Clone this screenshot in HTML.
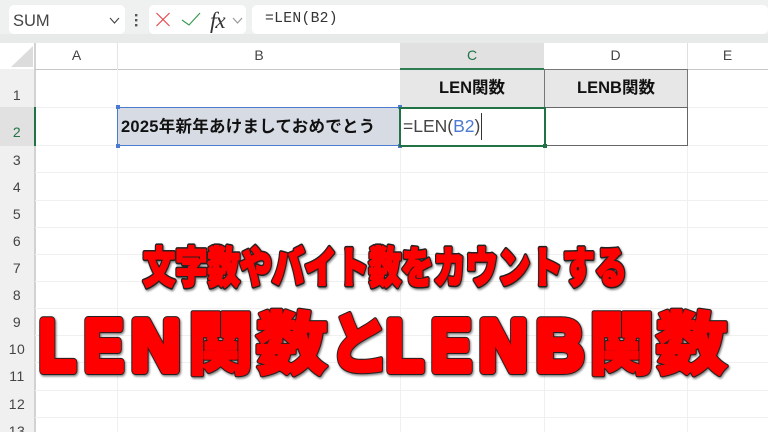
<!DOCTYPE html>
<html lang="ja"><head><meta charset="utf-8">
<style>
html,body{margin:0;padding:0;background:#fff}
#p{position:relative;width:768px;height:432px;overflow:hidden;background:#fff;font-family:"Liberation Sans","Noto Sans CJK JP",sans-serif}
#p div{position:absolute;box-sizing:border-box}
.h{top:43px;height:26px;text-align:center;line-height:24px;font-size:14px;color:#444}
.r{left:0;width:34px;text-align:center;font-size:14px;color:#444;line-height:20px;letter-spacing:.5px}
.gh{background:#f0f0f0;height:1px;left:35px;right:0}
.gv{background:#f0f0f0;width:1px;top:69px;bottom:0}
.b{font-weight:bold;color:#111;white-space:nowrap}
.o{stroke:#222;fill:#222}
.i{stroke:#f00;fill:#f00}
.l{font-family:"Liberation Sans",sans-serif;font-weight:bold;font-size:72px}
.k{font-family:"Noto Sans CJK JP",sans-serif;font-weight:900;font-size:68px}
.sm{font-family:"Noto Sans CJK JP",sans-serif;font-weight:900;font-size:43px}
svg text{stroke-linejoin:round}
.o .l{stroke-width:9px}.i .l{stroke-width:7px}
.o .k{stroke-width:4.500px}.i .k{stroke-width:2.400px}
</style></head><body><div id="p">
<div style="left:0;top:0;width:768px;height:34px;background:#eff0f0"></div>
<div style="left:0;top:34px;width:768px;height:9px;background:#e8e9e9"></div>
<div style="left:9px;top:5px;width:116px;height:29px;background:#fff;border-radius:5px"></div>
<div style="left:13px;top:10px;font-size:16.5px;color:#444;line-height:22px">SUM</div>
<svg style="position:absolute;left:0;top:0" width="768" height="70">
<path d="M110 18l4.500 5 4.500-5" fill="none" stroke="#444" stroke-width="1.100"/>
<rect x="135" y="14" width="2.400" height="2.400" fill="#555"/><rect x="135" y="19" width="2.400" height="2.400" fill="#555"/><rect x="135" y="24" width="2.400" height="2.400" fill="#555"/>
<rect x="149" y="5" width="97" height="29" rx="5" fill="#fff"/>
<rect x="252" y="5" width="516" height="29" rx="5" fill="#fff"/>
<path d="M156.500 13l13 13M169.500 13l-13 13" stroke="#e8484c" stroke-width="1.200" fill="none"/>
<path d="M182 20l7 5 11-12" stroke="#3a9a52" stroke-width="1.200" fill="none"/>
<path d="M233 18l4.500 5 4.500-5" fill="none" stroke="#999" stroke-width="1.200"/>
<path d="M33 67V46L11 67z" fill="#dcdcdc"/>
<rect x="400" y="43" width="144" height="26" fill="#e1e1e1"/>
</svg>
<div style="left:210px;top:8px;font:italic 23px 'Liberation Serif',serif;color:#333;line-height:26px;letter-spacing:-1px">fx</div>
<div style="left:265px;top:9px;font:14.700px 'Liberation Mono',monospace;color:#333;line-height:20px;letter-spacing:.3px">=LEN(B2)</div>

<div class="h" style="left:35px;width:83px">A</div>
<div class="h" style="left:118px;width:282px">B</div>
<div class="h" style="left:400px;width:144px;color:#217346">C</div>
<div class="h" style="left:544px;width:143px">D</div>
<div class="h" style="left:687px;width:81px">E</div>
<div style="left:117px;top:43px;width:1px;height:26px;background:#e4e4e4"></div>
<div style="left:687px;top:43px;width:1px;height:26px;background:#e0e0e0"></div>

<div style="left:0;top:69px;width:35px;height:363px;background:#f0f0f0"></div>
<div style="left:0;top:107px;width:34px;height:39px;background:#e1e1e1"></div>
<div style="left:34px;top:43px;width:2px;height:389px;background:#d2d2d2"></div>
<div style="left:35px;top:69px;width:733px;height:1px;background:#c6c6c6"></div>

<div class="gv" style="left:117px"></div><div class="gv" style="left:400px"></div><div class="gv" style="left:544px"></div><div class="gv" style="left:687px"></div>
<div class="gh" style="top:107px"></div><div class="gh" style="top:145px"></div><div class="gh" style="top:172px"></div><div class="gh" style="top:200px"></div><div class="gh" style="top:227px"></div><div class="gh" style="top:254px"></div><div class="gh" style="top:281px"></div><div class="gh" style="top:308px"></div><div class="gh" style="top:335px"></div><div class="gh" style="top:362px"></div><div class="gh" style="top:390px"></div><div class="gh" style="top:417px"></div>

<div class="r" style="top:85px">1</div>
<div class="r" style="top:122px;color:#217346">2</div>
<div class="r" style="top:150px">3</div><div class="r" style="top:177px">4</div><div class="r" style="top:204px">5</div><div class="r" style="top:231px">6</div><div class="r" style="top:258px">7</div><div class="r" style="top:285px">8</div><div class="r" style="top:312px">9</div><div class="r" style="top:339px">10</div><div class="r" style="top:366px">11</div><div class="r" style="top:394px">12</div><div class="r" style="top:421px">13</div>
<div style="left:34px;top:107px;width:2px;height:39px;background:#217346"></div>

<div style="left:400px;top:69px;width:144px;height:39px;background:#e7e7e7"></div>
<div style="left:544px;top:69px;width:144px;height:39px;background:#e7e7e7;border:1px solid #777;border-left:0"></div>
<div style="left:544px;top:107px;width:144px;height:39px;border:1px solid #666;border-left:0"></div>
<div style="left:400px;top:68px;width:144px;height:2px;background:#2e7d52"></div>
<div style="left:544px;top:69px;width:1px;height:39px;background:#777"></div>
<div class="b" style="left:400px;top:78px;width:144px;text-align:center;font-size:16.500px;line-height:20px">LEN関数</div>
<div class="b" style="left:544px;top:78px;width:144px;text-align:center;font-size:16.500px;line-height:20px">LENB関数</div>

<div style="left:117px;top:107px;width:284px;height:39px;background:#d7dbe4;border:1px solid #4a7bd0"></div>
<div style="left:116px;top:105px;width:4px;height:4px;background:#4a7bd0"></div>
<div style="left:116px;top:144px;width:4px;height:4px;background:#4a7bd0"></div>
<div style="left:398px;top:105px;width:4px;height:4px;background:#4a7bd0"></div>
<div style="left:398px;top:144px;width:4px;height:4px;background:#4a7bd0"></div>
<div class="b" style="left:121px;top:116.500px;font-size:16.500px;line-height:20px;letter-spacing:.25px">2025年新年あけましておめでとう</div>

<div style="left:399px;top:106.500px;width:146.500px;height:40px;background:#fff;border:2px solid #217346"></div>
<div style="left:543px;top:144px;width:4px;height:4px;background:#217346"></div>
<div style="left:403px;top:115px;font-size:17.500px;line-height:22px;color:#444;white-space:nowrap">=LEN(<span style="color:#4a7bd0">B2</span>)</div>
<div style="left:481px;top:113px;width:1px;height:27px;background:#333"></div>

<svg style="position:absolute;left:0;top:0" width="768" height="432">
<defs><filter id="s" x="-5%" y="-20%" width="110%" height="140%"><feDropShadow dx="1" dy="1.500" stdDeviation="1" flood-color="#000" flood-opacity=".5"/></filter></defs>

<g filter="url(#s)">
<g class="o" stroke-width="5">
<text class="sm" x="143" y="283" textLength="484" lengthAdjust="spacingAndGlyphs">文字数やバイト数をカウントする</text>
</g>
<g class="i" stroke-width="2">
<text class="sm" x="143" y="283" textLength="484" lengthAdjust="spacingAndGlyphs">文字数やバイト数をカウントする</text>
</g>
</g>

<g filter="url(#s)">
<g class="o">
<text class="l" transform="translate(39,370.500) scale(.83,1)">L</text>
<text class="l" transform="translate(84,370.500) scale(.82,1)">E</text>
<text class="l" transform="translate(131,370.500) scale(.95,1)">N</text>
<text class="k" transform="translate(188,368.500) scale(.96,1)">関</text>
<text class="k" transform="translate(256,368.500) scale(1.05,1)">数</text>
<text class="k" transform="translate(328.600,368.500) scale(.9,1)">と</text>
<text class="l" transform="translate(386,370.500) scale(.85,1)">L</text>
<text class="l" transform="translate(431,370.500) scale(.84,1)">E</text>
<text class="l" transform="translate(479,370.500) scale(.93,1)">N</text>
<text class="l" transform="translate(536,370.500) scale(.92,1)">B</text>
<text class="k" transform="translate(589,368.500) scale(.96,1)">関</text>
<text class="k" transform="translate(656,368.500) scale(1.05,1)">数</text>
</g>
<g class="i">
<text class="l" transform="translate(39,370.500) scale(.83,1)">L</text>
<text class="l" transform="translate(84,370.500) scale(.82,1)">E</text>
<text class="l" transform="translate(131,370.500) scale(.95,1)">N</text>
<text class="k" transform="translate(188,368.500) scale(.96,1)">関</text>
<text class="k" transform="translate(256,368.500) scale(1.05,1)">数</text>
<text class="k" transform="translate(328.600,368.500) scale(.9,1)">と</text>
<text class="l" transform="translate(386,370.500) scale(.85,1)">L</text>
<text class="l" transform="translate(431,370.500) scale(.84,1)">E</text>
<text class="l" transform="translate(479,370.500) scale(.93,1)">N</text>
<text class="l" transform="translate(536,370.500) scale(.92,1)">B</text>
<text class="k" transform="translate(589,368.500) scale(.96,1)">関</text>
<text class="k" transform="translate(656,368.500) scale(1.05,1)">数</text>
</g>
</g>
</svg>
</div></body></html>
